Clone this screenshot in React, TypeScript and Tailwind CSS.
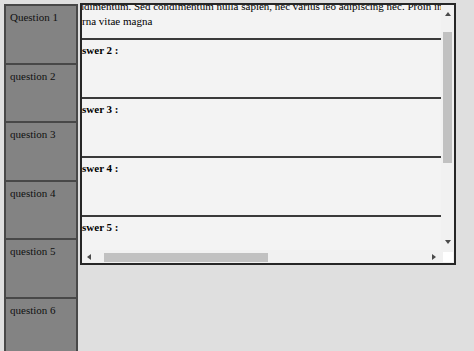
import React from "react";

const questions = ["Question 1", "question 2", "question 3", "question 4", "question 5", "question 6"];

function UpArrow() {
  return <div className="w-0 h-0 border-x-[3px] border-x-transparent border-b-[4px] border-b-[#4a4a4a]" />;
}
function DownArrow() {
  return <div className="w-0 h-0 border-x-[3px] border-x-transparent border-t-[4px] border-t-[#4a4a4a]" />;
}
function LeftArrow() {
  return <div className="w-0 h-0 border-y-[3px] border-y-transparent border-r-[4px] border-r-[#4a4a4a]" />;
}
function RightArrow() {
  return <div className="w-0 h-0 border-y-[3px] border-y-transparent border-l-[4px] border-l-[#4a4a4a]" />;
}

export default function App() {
  return (
    <div className="w-[474px] h-[351px] overflow-hidden bg-[#dfdfdf] flex items-start gap-[2px] pl-[4px] pt-[3px] font-['Liberation_Serif',serif] text-[11px] leading-[15px] text-[#111]">
      <div className="mt-[1px] w-[74px] shrink-0 border-x-2 border-t-2 border-[#484848] bg-[#838383]">
        {questions.map((q) => (
          <div key={q} className="h-[58.6px] border-b-2 border-[#484848] pl-[4px] pt-[4px]">
            {q}
          </div>
        ))}
      </div>

      <div className="w-[376px] h-[262px] shrink-0 border-2 border-[#262626] bg-[#f3f3f3] flex flex-col">
        <div className="flex flex-1 min-h-0">
          <div className="flex-1 overflow-hidden">
            <div className="w-[730px] ml-[-14px] mt-[-54px] text-black">
              <div className="pt-[3px] pb-[9px] border-b-2 border-[#3a3a3a] whitespace-nowrap">
                <div className="font-bold">Answer 1 :</div>
                <div>Lorem ipsum dolor sit amet, consectetur adipiscing elit. Nullam fermentum, nisl sed tincidunt posuere, nibh</div>
                <div>metus pulvinar lacus, eget vestibulum arcu erat eu tortor. Vivamus sit amet lectus et felis tristique</div>
                <div>condimentum. Sed condimentum nulla sapien, nec varius leo adipiscing nec. Proin in commodo massa, quis</div>
                <div>diurna vitae magna</div>
              </div>
              {[2, 3, 4, 5, 6].map((n) => (
                <div key={n} className="h-[59px] pt-[3px] border-b-2 border-[#3a3a3a]">
                  <div className="font-bold">Answer {n} :</div>
                </div>
              ))}
            </div>
          </div>
          <div className="w-[13px] shrink-0 bg-[#f1f1f1] flex flex-col">
            <div className="h-[18px] flex items-center justify-center">
              <UpArrow />
            </div>
            <div className="flex-1 pt-[9px] pl-[2px]">
              <div className="w-[9px] h-[131px] bg-[#c1c1c1]" />
            </div>
            <div className="h-[16px] flex items-center justify-center">
              <DownArrow />
            </div>
          </div>
        </div>
        <div className="h-[13px] shrink-0 bg-[#f1f1f1] flex">
          <div className="w-[14px] flex items-center justify-center">
            <LeftArrow />
          </div>
          <div className="flex-1 pt-[3px] pl-[8px]">
            <div className="w-[164px] h-[9px] bg-[#c1c1c1]" />
          </div>
          <div className="w-[14px] flex items-center justify-center">
            <RightArrow />
          </div>
          <div className="w-[13px] pt-[2px] pl-[2px]">
            <div className="w-[10px] h-[10px] bg-white" />
          </div>
        </div>
      </div>
    </div>
  );
}
